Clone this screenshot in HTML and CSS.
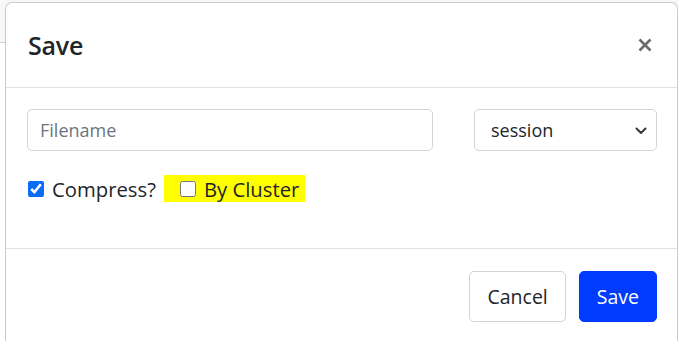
FILE: index.html
```html
<!DOCTYPE html>
<html>
<head>
<meta charset="utf-8">
<link rel="stylesheet" href="styles.css">
</head>
<body>
<div class="modal">
  <div class="modal-header">
    <h5 class="modal-title">Save</h5>
    <button class="close" aria-label="Close">
      <svg width="14" height="14" viewBox="0 0 14 14"><path d="M1.5 1.5 L12.5 12.5 M12.5 1.5 L1.5 12.5" stroke="#6b6b6b" stroke-width="2.6" stroke-linecap="butt"/></svg>
    </button>
  </div>
  <div class="modal-body">
    <div class="row">
      <input class="form-control" type="text" placeholder="Filename">
      <div class="form-select">
        <span>session</span>
        <svg width="12" height="8" viewBox="0 0 12 8"><path d="M1.5 1.5 L6 6 L10.5 1.5" fill="none" stroke="#343a40" stroke-width="2" stroke-linecap="round" stroke-linejoin="round"/></svg>
      </div>
    </div>
    <div class="checks">
      <label class="check"><input type="checkbox" checked><span>Compress?</span></label>
      <label class="check highlight"><input type="checkbox"><span>By Cluster</span></label>
    </div>
  </div>
  <div class="modal-footer">
    <button class="btn btn-cancel">Cancel</button>
    <button class="btn btn-save">Save</button>
  </div>
</div>
</body>
</html>
```
FILE: styles.css
```css
html, body {
  margin: 0;
  padding: 0;
  height: 100%;
  overflow: hidden;
}
body {
  background: linear-gradient(to bottom, #f6f7f9 0, #f6f7f9 42px, #cfd1d4 42px, #cfd1d4 43px, #ffffff 43px);
  font-family: "Open Sans", "Noto Sans", sans-serif;
  color: #212529;
}
.modal {
  margin: 2px 0 0 5px;
  width: 673px;
  height: 339px;
  box-sizing: border-box;
  background: #fff;
  border: 1px solid #c9cbce;
  border-bottom: 0;
  border-radius: 7px 7px 0 0;
}
.modal-header {
  height: 85px;
  box-sizing: border-box;
  display: flex;
  align-items: center;
  justify-content: space-between;
  padding: 0 25px 0 22px;
  border-bottom: 1px solid #dee2e6;
}
.modal-title {
  margin: 0;
  font-size: 25px;
  font-weight: 600;
  letter-spacing: -0.2px;
  line-height: 1;
  padding-top: 1px;
}
.close {
  border: 0;
  background: none;
  padding: 0;
  margin: 0;
  width: 14px;
  height: 14px;
  display: flex;
}
.modal-body {
  height: 161px;
  box-sizing: border-box;
  padding: 21px 20px 0 21px;
  border-bottom: 1px solid #dee2e6;
}
.row {
  display: flex;
  justify-content: space-between;
}
.form-control {
  width: 406px;
  height: 42px;
  box-sizing: border-box;
  border: 1px solid #ced4da;
  border-radius: 5px;
  padding: 0 12px;
  font-family: inherit;
  font-size: 18px;
  color: #212529;
  outline: none;
  margin: 0;
}
.form-control::placeholder {
  color: #6c757d;
}
.form-select {
  width: 183px;
  height: 42px;
  box-sizing: border-box;
  border: 1px solid #ced4da;
  border-radius: 5px;
  padding: 0 9px 0 16px;
  display: flex;
  align-items: center;
  justify-content: space-between;
  font-size: 18px;
  color: #212529;
}
.form-select svg {
  margin-top: 1px;
}
.checks {
  display: flex;
  align-items: center;
  margin-top: 24px;
  padding-left: 1px;
  gap: 8px;
}
.check {
  display: flex;
  align-items: center;
  font-size: 20.3px;
  height: 27px;
}
.check input {
  width: 16px;
  height: 16px;
  margin: 0 8px 0 0;
  accent-color: #0b6cf5;
}
.highlight {
  background: #ffff00;
  padding: 0 6px 0 16px;
}
.modal-footer {
  display: flex;
  justify-content: flex-end;
  gap: 13px;
  padding: 22px 20px 0 0;
}
.btn {
  height: 51px;
  border-radius: 5px;
  font-family: inherit;
  font-size: 19.5px;
  padding: 0 17px;
  margin: 0;
}
.btn-cancel {
  background: #fff;
  border: 1px solid #cfd2d6;
  color: #212529;
}
.btn-save {
  background: #003cff;
  border: 1px solid #003cff;
  color: #fff;
}
```
